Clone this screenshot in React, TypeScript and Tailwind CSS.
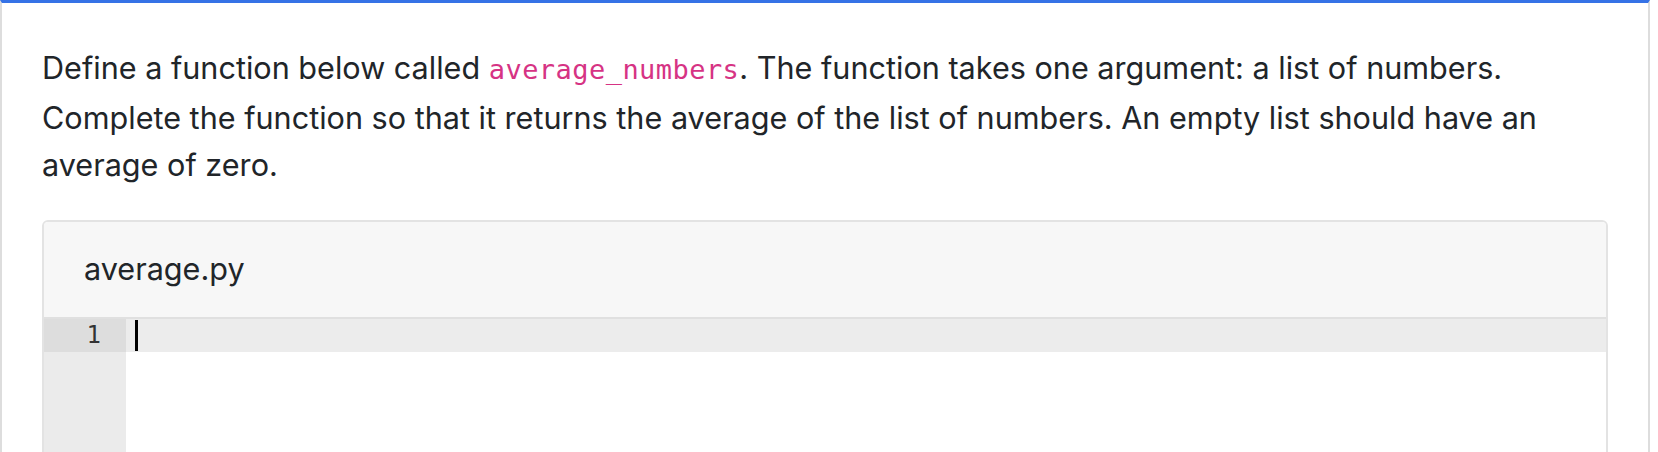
export default function App() {
  return (
    <div className="h-[452px] w-[1658px] overflow-hidden bg-white">
      <div
        className="h-full w-[1650px] border-x-2 border-t-[3px] border-x-[#dddddd] border-t-[#3572e6] px-10 pt-[41px]"
        style={{ fontFamily: "Inter, 'Liberation Sans', sans-serif" }}
      >
        <p className="text-[30.6px] leading-[47.6px] text-[#212529]">
          Define a function below called{" "}
          <code
            className="text-[27px] tracking-[0.45px] text-[#d63384]"
            style={{ fontFamily: "'DejaVu Sans Mono', monospace" }}
          >
            average_numbers
          </code>
          . The function takes one argument: a list of numbers. Complete the function so that it returns the average
          of the list of numbers. An empty list should have an average of zero.
        </p>

        <div className="mt-[31px] overflow-hidden rounded-[6px] border-2 border-[#e3e3e3]">
          <div className="flex h-[97px] items-center border-b-2 border-[#e0e0e0] bg-[#f7f7f7] px-10 text-[30.6px] text-[#212529]">
            average.py
          </div>
          <div className="flex h-[200px]" style={{ fontFamily: "'DejaVu Sans Mono', monospace" }}>
            <div className="flex w-[82px] flex-col bg-[#ebebeb]">
              <div className="flex h-[33px] items-center justify-end bg-[#dddddd] pr-[25px] text-[24px] text-[#333]">
                1
              </div>
            </div>
            <div className="flex flex-1 flex-col bg-white">
              <div className="flex h-[33px] items-center bg-[#ececec] pl-[9px]">
                <div className="h-[31px] w-[3px] bg-black" />
              </div>
            </div>
          </div>
        </div>
      </div>
    </div>
  );
}
